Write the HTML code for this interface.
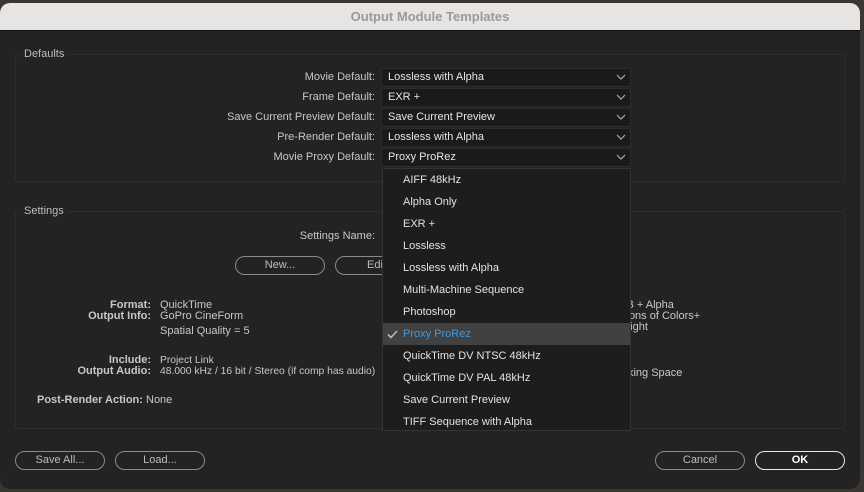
<!DOCTYPE html>
<html><head><style>
*{margin:0;padding:0;box-sizing:border-box}
body{width:864px;height:492px;background:#3a3631;position:relative;overflow:hidden;font-family:"Liberation Sans",sans-serif;font-size:11px;color:#c8c8c8}
.win{position:absolute;left:0;top:3px;width:860px;height:486px;background:#232323;border-radius:10px;overflow:hidden}
.title{height:28px;background:#e6e5e3;border-bottom:1px solid #111;text-align:center;line-height:28px;font-weight:bold;font-size:13px;color:#9a9a9a}
.abs{position:absolute;white-space:nowrap}
.box{position:absolute;border:1px solid #2e2e2e;border-radius:3px}
.lbl{position:absolute;background:#232323;padding:0 4px;color:#bdbdbd}
.r{text-align:right}
.dd{position:absolute;left:381px;width:250px;height:19px;background:#1a1a1a;border:1px solid #2c2c2c;border-radius:2px;padding-left:6px;line-height:17px;color:#e6e6e6}
.dd svg{position:absolute;right:4px;top:5px}
.btn{position:absolute;height:19px;border:1.5px solid #8a8a8a;border-radius:10px;text-align:center;line-height:16px;color:#bdbdbd}
.menu{position:absolute;left:382px;top:165px;width:249px;height:263px;background:#1d1d1d;border:1px solid #333}
.it{height:22px;line-height:22px;padding-left:20px;color:#e2e2e2}
.b{font-weight:bold}
</style></head><body>
<div class="win">
<div class="title">Output Module Templates</div>
<div class="box" style="left:15px;top:51px;width:830px;height:128px"></div>
<div class="lbl" style="left:20px;top:45px">Defaults</div>
<div class="abs r" style="right:485px;top:68px">Movie Default:</div>
<div class="abs r" style="right:485px;top:88px">Frame Default:</div>
<div class="abs r" style="right:485px;top:108px">Save Current Preview Default:</div>
<div class="abs r" style="right:485px;top:128px">Pre-Render Default:</div>
<div class="abs r" style="right:485px;top:148px">Movie Proxy Default:</div>
<div class="dd" style="top:65px">Lossless with Alpha<svg width="10" height="6"><path d="M1 1L5 5L9 1" stroke="#aaa" fill="none" stroke-width="1.2"/></svg></div>
<div class="dd" style="top:85px">EXR +<svg width="10" height="6"><path d="M1 1L5 5L9 1" stroke="#aaa" fill="none" stroke-width="1.2"/></svg></div>
<div class="dd" style="top:105px">Save Current Preview<svg width="10" height="6"><path d="M1 1L5 5L9 1" stroke="#aaa" fill="none" stroke-width="1.2"/></svg></div>
<div class="dd" style="top:125px">Lossless with Alpha<svg width="10" height="6"><path d="M1 1L5 5L9 1" stroke="#aaa" fill="none" stroke-width="1.2"/></svg></div>
<div class="dd" style="top:145px">Proxy ProRez<svg width="10" height="6"><path d="M1 1L5 5L9 1" stroke="#aaa" fill="none" stroke-width="1.2"/></svg></div>

<div class="box" style="left:15px;top:208px;width:830px;height:218px"></div>
<div class="lbl" style="left:20px;top:202px">Settings</div>
<div class="abs r" style="right:485px;top:227px">Settings Name:</div>
<div class="btn" style="left:235px;top:253px;width:90px">New...</div>
<div class="btn" style="left:335px;top:253px;width:90px;text-align:left;padding-left:31px">Edit...</div>
<div class="abs r b" style="right:709px;top:297px;line-height:11px">Format:<br>Output Info:</div>
<div class="abs" style="left:160px;top:297px;line-height:11px">QuickTime<br>GoPro CineForm</div>
<div class="abs" style="left:160px;top:322px">Spatial Quality = 5</div>
<div class="abs r b" style="right:709px;top:352px;line-height:11px">Include:<br>Output Audio:</div>
<div class="abs" style="left:160px;top:352px;line-height:11px;font-size:10.3px">Project Link<br>48.000 kHz / 16 bit / Stereo (if comp has audio)</div>
<div class="abs b" style="left:37px;top:391px">Post-Render Action: <span style="font-weight:normal">None</span></div>
<div class="abs" style="left:610px;top:297px;line-height:11px">RGB + Alpha<br>Millions of Colors+<br>Straight</div>
<div class="abs" style="left:608px;top:364px">Working Space</div>

<div class="menu">
<div class="it">AIFF 48kHz</div>
<div class="it">Alpha Only</div>
<div class="it">EXR +</div>
<div class="it">Lossless</div>
<div class="it">Lossless with Alpha</div>
<div class="it">Multi-Machine Sequence</div>
<div class="it">Photoshop</div>
<div class="it" style="background:#414141;color:#3a9be8;position:relative"><svg style="position:absolute;left:4px;top:7px" width="11" height="9"><path d="M1 4.5L4 7.5L10 1" stroke="#bbb" fill="none" stroke-width="1.6"/></svg>Proxy ProRez</div>
<div class="it">QuickTime DV NTSC 48kHz</div>
<div class="it">QuickTime DV PAL 48kHz</div>
<div class="it">Save Current Preview</div>
<div class="it">TIFF Sequence with Alpha</div>
</div>

<div class="btn" style="left:15px;top:448px;width:90px">Save All...</div>
<div class="btn" style="left:115px;top:448px;width:90px">Load...</div>
<div class="btn" style="left:655px;top:448px;width:90px">Cancel</div>
<div class="btn b" style="left:755px;top:448px;width:90px;border-color:#e8e8e8;color:#fff">OK</div>
</div>
</body></html>
